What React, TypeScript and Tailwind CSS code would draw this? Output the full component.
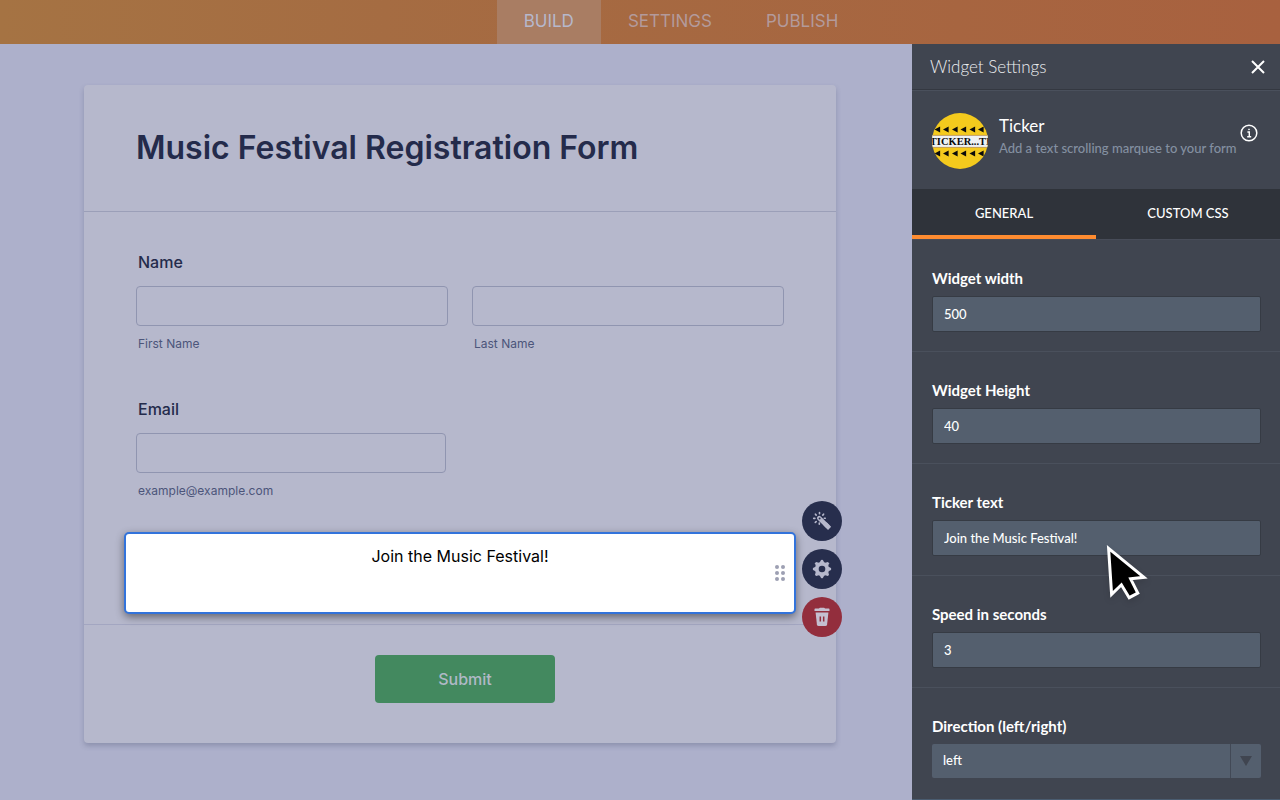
import { useState } from "react";
import type { ReactNode } from "react";

const navItems = ["BUILD", "SETTINGS", "PUBLISH"];

const textSettings = [
  { id: "widget-width", label: "Widget width", value: "500" },
  { id: "widget-height", label: "Widget Height", value: "40" },
  { id: "ticker-text", label: "Ticker text", value: "Join the Music Festival!" },
  { id: "speed", label: "Speed in seconds", value: "3" },
];

const arrowColumns = [2.5, 11, 20, 28.5, 37.5, 46];

function WandIcon() {
  return (
    <svg viewBox="0 0 20 20" className="size-5" aria-hidden="true">
      <g stroke="#b6b8cc" strokeWidth="1.6" strokeLinecap="round">
        <path d="M7.5 1.6v1.2M3.4 3.2l.8 .9M1.7 7.4h1.2M3.3 11.4l.9-.8M7.3 13.2v-1.2M11.6 3.2l-.8 .9M13.3 7.2h-1" />
      </g>
      <path d="M7.2 7.1L15.5 15.3" stroke="#b6b8cc" strokeWidth="4.4" strokeLinecap="round" />
      <path d="M13 12.8L17.6 17.4" stroke="#b6b8cc" strokeWidth="4.4" />
      <circle cx="7.6" cy="7.5" r="1" fill="#272e4d" />
    </svg>
  );
}

function GearIcon() {
  return (
    <svg viewBox="0 0 20 20" className="size-5" aria-hidden="true">
      <g fill="#b6b8cc">
        <circle cx="10" cy="10" r="7" />
        {[0, 45, 90, 135, 180, 225, 270, 315].map((angle) => (
          <path key={angle} d="M7.4 4L9.1 1Q10 .6 10.9 1L12.6 4Z" transform={`rotate(${angle} 10 10)`} />
        ))}
      </g>
      <circle cx="10" cy="10" r="3.3" fill="#272e4d" />
    </svg>
  );
}

function TrashIcon() {
  return (
    <svg viewBox="0 0 20 20" className="size-5" aria-hidden="true">
      <path d="M2.5 2.2Q2.5 1.6 3.2 1.5L7 1.4Q7.4 .8 8 .8h4q.6 0 1 .6l3.8 .1q.7 .1 .7 .7V4h-15Z" fill="#c5bfd0" />
      <path d="M3.6 5.4h12.8l-1.3 12q-.2 1.6-1.8 1.6H6.7q-1.6 0-1.8-1.6Z" fill="#c5bfd0" />
      <path d="M8.3 9.6v5M11.7 9.6v5" stroke="#932e3d" strokeWidth="1.5" />
    </svg>
  );
}

function TickerLogo() {
  return (
    <svg viewBox="0 0 56 56" className="size-14 shrink-0" role="img" aria-label="Ticker logo">
      <defs>
        <clipPath id="ticker-disc">
          <circle cx="28" cy="28" r="28" />
        </clipPath>
      </defs>
      <g clipPath="url(#ticker-disc)">
        <rect width="56" height="56" fill="#f4ca1d" />
        {arrowColumns.map((x) => (
          <g key={x} transform={`translate(${x} 0)`} fill="#0b0b0b">
            <path d="M0 16.5l5.6-3v6Z" />
            <path d="M0 40.5l5.6-3v6Z" />
          </g>
        ))}
        <rect y="22" width="56" height="12.5" fill="#eef1f2" />
        <path d="M0 22.4h56M0 34.4h56" stroke="#b98a3a" strokeWidth=".8" />
        <text
          x="28"
          y="32"
          textAnchor="middle"
          fontSize="10.5"
          fontWeight="700"
          fill="#0b0b0b"
          className="font-['Liberation_Serif',serif]"
        >
          TICKER...TI
        </text>
      </g>
    </svg>
  );
}

function Cursor() {
  return (
    <svg
      viewBox="0 0 56 68"
      className="pointer-events-none absolute top-5 left-[169px] z-10 h-[68px] w-14 drop-shadow-md"
      aria-hidden="true"
    >
      <path
        d="M7.6 8.4L43 37.3L29.6 38.8L36.8 53.2L28.2 57.7L20.4 44.8L10.6 54.4Z"
        fill="#000"
        stroke="#fff"
        strokeWidth="3"
      />
    </svg>
  );
}

function FormInput({ id, caption, className }: { id: string; caption: string; className: string }) {
  return (
    <div className={className}>
      <input id={id} className="h-10 w-full rounded border border-[#9095b0] bg-transparent px-3 outline-none" />
      <label htmlFor={id} className="mt-2.5 block px-0.5 text-xs leading-4 text-[#4c557a]">
        {caption}
      </label>
    </div>
  );
}

function RoundButton({ label, className, children }: { label: string; className: string; children: ReactNode }) {
  return (
    <button type="button" aria-label={label} className={`flex size-10 items-center justify-center rounded-full ${className}`}>
      {children}
    </button>
  );
}

function FormPreview() {
  return (
    <main className="min-w-0 flex-1 overflow-hidden bg-[#adb0cb] pt-[41px] pl-2">
      <div className="mx-auto w-full max-w-[752px] rounded bg-[#b6b8cc] shadow-[0_3px_5px_rgba(70,75,110,0.3)]">
        <header className="border-b border-[#9b9fb8] px-[52px] pt-[43px] pb-[43px]">
          <h1 className="text-[32px] leading-10 font-semibold text-[#242b4b]">Music Festival Registration Form</h1>
        </header>
        <div className="px-[52px] pt-10 pb-2.5">
          <div role="group" aria-labelledby="name-heading">
            <h2 id="name-heading" className="px-0.5 text-base leading-5 font-medium text-[#242b4b]">
              Name
            </h2>
            <div className="mt-3.5 flex gap-6">
              <FormInput id="first-name" caption="First Name" className="flex-1" />
              <FormInput id="last-name" caption="Last Name" className="flex-1" />
            </div>
          </div>
          <div role="group" aria-labelledby="email-heading" className="mt-[47px]">
            <h2 id="email-heading" className="px-0.5 text-base leading-5 font-medium text-[#242b4b]">
              Email
            </h2>
            <div className="mt-3.5">
              <FormInput id="email" caption="example@example.com" className="w-[310px]" />
            </div>
          </div>
          <div className="relative -mx-3 mt-[33px] h-[82px] rounded-[5px] border-2 border-[#3273db] bg-white pt-3 shadow-[0_3px_8px_rgba(0,0,0,0.45)]">
            <p className="text-center text-base leading-5 text-black">Join the Music Festival!</p>
            <svg viewBox="0 0 10 16" className="absolute top-[31px] right-[9px] h-4 w-2.5" fill="#9da0b3" aria-hidden="true">
              {[2, 8, 14].map((y) => (
                <g key={y}>
                  <circle cx="2" cy={y} r="2" />
                  <circle cx="8" cy={y} r="2" />
                </g>
              ))}
            </svg>
            <div className="absolute -top-[33px] left-full ml-2 flex flex-col gap-2">
              <RoundButton label="Widget wizard" className="bg-[#272e4d]">
                <WandIcon />
              </RoundButton>
              <RoundButton label="Widget properties" className="bg-[#272e4d]">
                <GearIcon />
              </RoundButton>
              <RoundButton label="Delete widget" className="bg-[#932e3d]">
                <TrashIcon />
              </RoundButton>
            </div>
          </div>
        </div>
        <footer className="flex justify-center border-t border-[#a3a6c1] pt-[30px] pb-10 pl-2.5">
          <button type="button" className="h-12 w-[180px] rounded bg-[#43895f] text-base font-medium text-[#b0b9c6]">
            Submit
          </button>
        </footer>
      </div>
    </main>
  );
}

function SettingsPanel() {
  const [values, setValues] = useState<Record<string, string>>(
    Object.fromEntries(textSettings.map((setting) => [setting.id, setting.value])),
  );

  return (
    <aside className="w-[368px] shrink-0 overflow-hidden bg-[#404550] font-['Lato',sans-serif] text-white">
      <div className="flex h-[46px] items-center justify-between border-b border-[#343841] pr-3.5 pl-[18px]">
        <h2 className="text-[17px] font-light text-[#eceef0]">Widget Settings</h2>
        <button type="button" aria-label="Close" className="size-4">
          <svg viewBox="0 0 16 16" className="size-4" aria-hidden="true">
            <path d="M2 2l12 12M14 2L2 14" stroke="#fff" strokeWidth="2" />
          </svg>
        </button>
      </div>
      <section className="flex h-[99px] items-center gap-[11px] border-t border-[#4a505c] pt-0.5 pr-[22px] pl-5">
        <TickerLogo />
        <div className="relative min-w-0 flex-1 pb-2.5">
          <h3 className="text-[17px] leading-6">Ticker</h3>
          <p className="text-[13px] leading-5 font-medium whitespace-nowrap text-[#8490a1]">Add a text scrolling marquee to your form</p>
          <button type="button" aria-label="Widget info" className="absolute top-2.5 right-0 size-[18px]">
            <svg viewBox="0 0 18 18" className="size-[18px]" fill="none" stroke="#fff" aria-hidden="true">
              <circle cx="9" cy="9" r="7.8" strokeWidth="1.5" />
              <path d="M7.4 8h1.9v4.6M7.2 12.7h4" strokeWidth="1.4" />
              <circle cx="9" cy="5.4" r=".5" strokeWidth="1" />
            </svg>
          </button>
        </div>
      </section>
      <div role="tablist" className="flex h-[51px] border-b border-[#474c58] bg-[#2f333a] text-[13px] font-medium">
        <button type="button" role="tab" aria-selected="true" className="flex-1 border-b-4 border-[#ff8c30] pt-1">
          GENERAL
        </button>
        <button type="button" role="tab" aria-selected="false" className="flex-1">
          CUSTOM CSS
        </button>
      </div>
      {textSettings.map((setting) => (
        <div key={setting.id} className="h-28 border-b border-[#4a505c] pt-7 pr-[19px] pl-5">
          <label htmlFor={setting.id} className="block text-[15px] leading-5 font-bold">
            {setting.label}
          </label>
          <div className="relative mt-2">
            <input
              id={setting.id}
              value={values[setting.id]}
              onChange={(event) => setValues({ ...values, [setting.id]: event.target.value })}
              className="block h-9 w-full rounded-xs border border-[#363b44] bg-[#545f6e] px-[11px] text-[13px] font-medium text-white outline-none"
            />
            {setting.id === "ticker-text" && <Cursor />}
          </div>
        </div>
      ))}
      <div className="h-28 border-b border-[#4a5c70] pt-7 pr-[19px] pl-5">
        <label htmlFor="direction" className="block text-[15px] leading-5 font-bold">
          Direction (left/right)
        </label>
        <div className="relative mt-2">
          <select
            id="direction"
            className="block h-[34px] w-full appearance-none rounded-xs bg-[#545f6e] px-[11px] text-[13px] font-medium text-white outline-none"
          >
            <option>left</option>
            <option>right</option>
          </select>
          <span className="pointer-events-none absolute inset-y-0 right-0 flex w-[31px] items-center justify-center border-l border-[#424956]">
            <svg viewBox="0 0 12 10" className="h-2.5 w-3" aria-hidden="true">
              <path d="M0 0h12L6 10Z" fill="#404550" />
            </svg>
          </span>
        </div>
      </div>
    </aside>
  );
}

export default function App() {
  return (
    <div className="flex h-screen flex-col overflow-hidden font-['Inter',sans-serif]">
      <nav className="flex h-11 shrink-0 justify-center bg-linear-to-r from-[#a57343] via-[#a56c42] via-30% to-[#a8613f] pl-[82px]">
        {navItems.map((item, index) => (
          <a
            key={item}
            href={`#${item.toLowerCase()}`}
            className={`flex items-center px-[27px] text-[17px] ${index === 0 ? "bg-[#a97d63] text-[#b6b8cc]" : "text-[#b39a9b]"}`}
          >
            {item}
          </a>
        ))}
      </nav>
      <div className="flex min-h-0 flex-1">
        <FormPreview />
        <SettingsPanel />
      </div>
    </div>
  );
}
